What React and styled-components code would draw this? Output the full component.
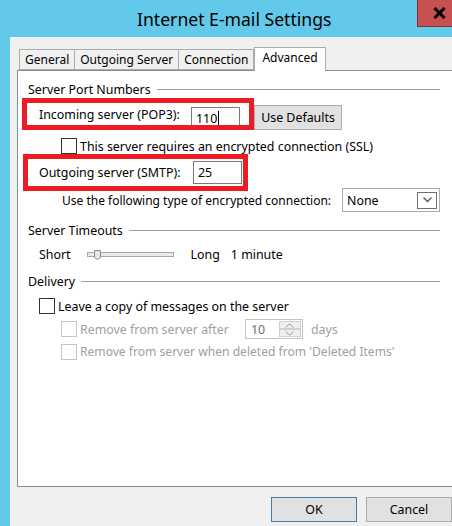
import React from 'react'
import styled, { createGlobalStyle } from 'styled-components'

const GlobalStyle = createGlobalStyle`
  html, body {
    margin: 0;
    padding: 0;
    overflow: hidden;
  }
  body {
    font-family: "Noto Sans", "Liberation Sans", sans-serif;
    font-size: 12.4px;
    color: #000;
  }
`

const Window = styled.div`
  width: 452px;
  height: 526px;
  background: #63c9ea;
  display: flex;
  flex-direction: column;
  overflow: hidden;
`

const TitleBar = styled.div`
  height: 37px;
  flex: none;
  display: flex;
  align-items: flex-start;
`

const Title = styled.div`
  margin: 6px 0 0 137px;
  font-size: 17.6px;
  line-height: 26px;
  color: #000;
`

const CloseButton = styled.div`
  margin-left: auto;
  width: 35px;
  height: 27px;
  background: #c75050;
  border-left: 1px solid #8a3030;
  border-bottom: 1px solid #8a3030;
  box-sizing: border-box;
  display: flex;
  align-items: center;
  justify-content: center;
  padding-left: 8px;
`

const Frame = styled.div`
  flex: 1;
  margin-left: 10px;
  background: #f0f0f0;
  padding: 10px 0 0 7px;
  display: flex;
  flex-direction: column;
  width: 480px;
`

const TabRow = styled.div`
  display: flex;
  align-items: flex-end;
  padding-left: 2px;
  height: 23px;
  position: relative;
  z-index: 1;
  font-size: 12px;
`

const Tab = styled.div`
  height: ${p => (p.$active ? '24px' : '21px')};
  margin-bottom: ${p => (p.$active ? '-1px' : '0')};
  padding: 0 ${p => (p.$active ? '7px' : '5px')};
  box-sizing: border-box;
  border: 1px solid #acacac;
  border-bottom: ${p => (p.$active ? 'none' : '1px solid #acacac')};
  border-left: ${p => (p.$first || p.$active ? '1px solid #acacac' : 'none')};
  background: ${p => (p.$active ? '#fff' : '#f0f0f0')};
  line-height: 20px;
  white-space: nowrap;
`

const Panel = styled.div`
  height: 417px;
  box-sizing: border-box;
  border: 1px solid #898c95;
  background: #fff;
  padding: 9px 0 0 10px;
  width: 470px;
`

const Content = styled.div`
  width: 412px;
  display: flex;
  flex-direction: column;
`

const GroupHeader = styled.div`
  display: flex;
  align-items: center;
  height: 18px;
  margin-top: ${p => p.$top || 0}px;
  &::after {
    content: '';
    flex: 1;
    height: 1px;
    background: #a0a0a0;
    margin-left: 6px;
  }
`

const Row = styled.div`
  display: flex;
  align-items: center;
  height: ${p => p.$h || 18}px;
  margin-top: ${p => p.$top || 0}px;
  padding-left: ${p => p.$indent || 0}px;
  color: ${p => (p.$disabled ? '#a0a0a0' : '#000')};
  font-size: ${p => (p.$size ? `${p.$size}px` : 'inherit')};
`

const Highlight = styled.div`
  display: flex;
  align-items: center;
  box-sizing: border-box;
  height: ${p => p.$h}px;
  width: ${p => p.$w}px;
  margin-left: ${p => p.$left || 0}px;
  border: 5px solid #ed1c24;
  padding-left: ${p => p.$pad}px;
  overflow: hidden;
`

const Label = styled.span`
  white-space: nowrap;
  width: ${p => (p.$w ? `${p.$w}px` : 'auto')};
  margin-left: ${p => p.$left || 0}px;
  flex: none;
`

const TextBox = styled.div`
  box-sizing: border-box;
  width: ${p => p.$w}px;
  height: 23px;
  border: 1px solid #7a7a7a;
  background: #fff;
  padding-left: 4px;
  line-height: 21px;
  margin-top: ${p => p.$top || 0}px;
  flex: none;
  display: flex;
  align-items: center;
`

const Caret = styled.span`
  display: inline-block;
  width: 1px;
  height: 15px;
  background: #000;
  margin-left: 1px;
`

const Button = styled.div`
  box-sizing: border-box;
  width: ${p => p.$w}px;
  height: 25px;
  border: 1px solid ${p => (p.$default ? '#3c7fb1' : '#adadad')};
  background: #e1e1e1;
  display: flex;
  align-items: center;
  justify-content: center;
  flex: none;
  align-self: ${p => (p.$bottom ? 'flex-end' : 'auto')};
`

const CheckBox = styled.span`
  box-sizing: border-box;
  width: 16px;
  height: 16px;
  border: 1px solid ${p => (p.$disabled ? '#c4c4c4' : '#333')};
  background: #fff;
  margin-right: 3px;
  flex: none;
`

const Select = styled.div`
  box-sizing: border-box;
  width: 98px;
  height: 24px;
  border: 1px solid #acacac;
  margin-left: auto;
  display: flex;
  align-items: center;
  padding: 0 2px 0 4px;
  font-size: 12.4px;
`

const SelectArrow = styled.span`
  margin-left: auto;
  box-sizing: border-box;
  width: 20px;
  height: 17px;
  border: 1px solid #707070;
  display: flex;
  align-items: center;
  justify-content: center;
`

const Track = styled.div`
  position: relative;
  box-sizing: border-box;
  width: 87px;
  height: 5px;
  margin: 0 17px 0 16px;
  border: 1px solid #a8a8a8;
  background: #e7eaea;
`

const Thumb = styled.svg`
  position: absolute;
  left: 6px;
  top: -3px;
`

const SpinBox = styled.div`
  box-sizing: border-box;
  width: 58px;
  height: 20px;
  border: 1px solid #c4c4c4;
  display: flex;
  align-items: stretch;
  margin-left: ${p => p.$left}px;
  background: #fff;
`

const SpinValue = styled.span`
  flex: 1;
  padding-left: 5px;
  display: flex;
  align-items: center;
  color: #6d6d6d;
`

const SpinButtons = styled.div`
  width: 23px;
  display: flex;
  flex-direction: column;
`

const SpinHalf = styled.div`
  flex: 1;
  background: #efefef;
  border: 1px solid #cfcfcf;
  margin: ${p => (p.$up ? '1px 1px 0 0' : '0 1px 1px 0')};
  display: flex;
  align-items: center;
  justify-content: center;
`

const Footer = styled.div`
  display: flex;
  gap: 9px;
  padding: 10px 0 0 254px;
`

const Chevron = ({ up }) => (
  <svg width="9" height="5" viewBox="0 0 9 5">
    <path
      d={up ? 'M0.5 4.5 L4.5 0.8 L8.5 4.5' : 'M0.5 0.5 L4.5 4.2 L8.5 0.5'}
      fill="none"
      stroke="#9a9a9a"
      strokeWidth="1"
    />
  </svg>
)

function App() {
  return (
    <Window>
      <GlobalStyle />
      <TitleBar>
        <Title>Internet E-mail Settings</Title>
        <CloseButton>
          <svg width="13" height="12" viewBox="0 0 13 12">
            <path d="M1.5 1 L11.5 11 M11.5 1 L1.5 11" stroke="#000" strokeWidth="3" />
          </svg>
        </CloseButton>
      </TitleBar>

      <Frame>
        <TabRow>
          <Tab $first>General</Tab>
          <Tab>Outgoing Server</Tab>
          <Tab>Connection</Tab>
          <Tab $active>Advanced</Tab>
        </TabRow>

        <Panel>
          <Content>
            <GroupHeader>Server Port Numbers</GroupHeader>

            <Row $h={32}>
              <Highlight $h={32} $w={232} $left={-6} $pad={12}>
                <Label $w={152}>Incoming server (POP3):</Label>
                <TextBox $w={49} $top={8}>
                  110<Caret />
                </TextBox>
              </Highlight>
              <Button $w={88} $bottom>Use Defaults</Button>
            </Row>

            <Row $h={16} $top={8} $indent={33}>
              <CheckBox />
              This server requires an encrypted connection (SSL)
            </Row>

            <Row $h={37}>
              <Highlight $h={37} $w={225} $left={-5} $pad={11}>
                <Label $w={154}>Outgoing server (SMTP):</Label>
                <TextBox $w={49}>25</TextBox>
              </Highlight>
            </Row>

            <Row $h={24} $top={-3} $indent={34} $size={12}>
              Use the following type of encrypted connection:
              <Select>
                None
                <SelectArrow>
                  <svg width="9" height="6" viewBox="0 0 9 6">
                    <path d="M0.5 0.5 L4.5 4.5 L8.5 0.5" fill="none" stroke="#555" strokeWidth="1.3" />
                  </svg>
                </SelectArrow>
              </Select>
            </Row>

            <GroupHeader $top={9}>Server Timeouts</GroupHeader>

            <Row $top={6} $indent={11}>
              Short
              <Track>
                <Thumb width="7" height="10" viewBox="0 0 7 10">
                  <path d="M0.5 0.5 H6.5 V7.5 L3.5 9.5 L0.5 7.5 Z" fill="#e6e6e6" stroke="#8c8c8c" />
                </Thumb>
              </Track>
              Long
              <Label $left={11}>1 minute</Label>
            </Row>

            <GroupHeader $top={9}>Delivery</GroupHeader>

            <Row $h={16} $top={8} $indent={11}>
              <CheckBox />
              Leave a copy of messages on the server
            </Row>

            <Row $h={20} $top={5} $indent={33} $disabled>
              <CheckBox $disabled />
              Remove from server after
              <SpinBox $left={16}>
                <SpinValue>10</SpinValue>
                <SpinButtons>
                  <SpinHalf $up>
                    <Chevron up />
                  </SpinHalf>
                  <SpinHalf>
                    <Chevron />
                  </SpinHalf>
                </SpinButtons>
              </SpinBox>
              <Label $left={8}>days</Label>
            </Row>

            <Row $h={17} $top={4} $indent={33} $disabled $size={12.1}>
              <CheckBox $disabled />
              Remove from server when deleted from 'Deleted Items'
            </Row>
          </Content>
        </Panel>

        <Footer>
          <Button $w={86} $default>OK</Button>
          <Button $w={86}>Cancel</Button>
        </Footer>
      </Frame>
    </Window>
  )
}

export default App
